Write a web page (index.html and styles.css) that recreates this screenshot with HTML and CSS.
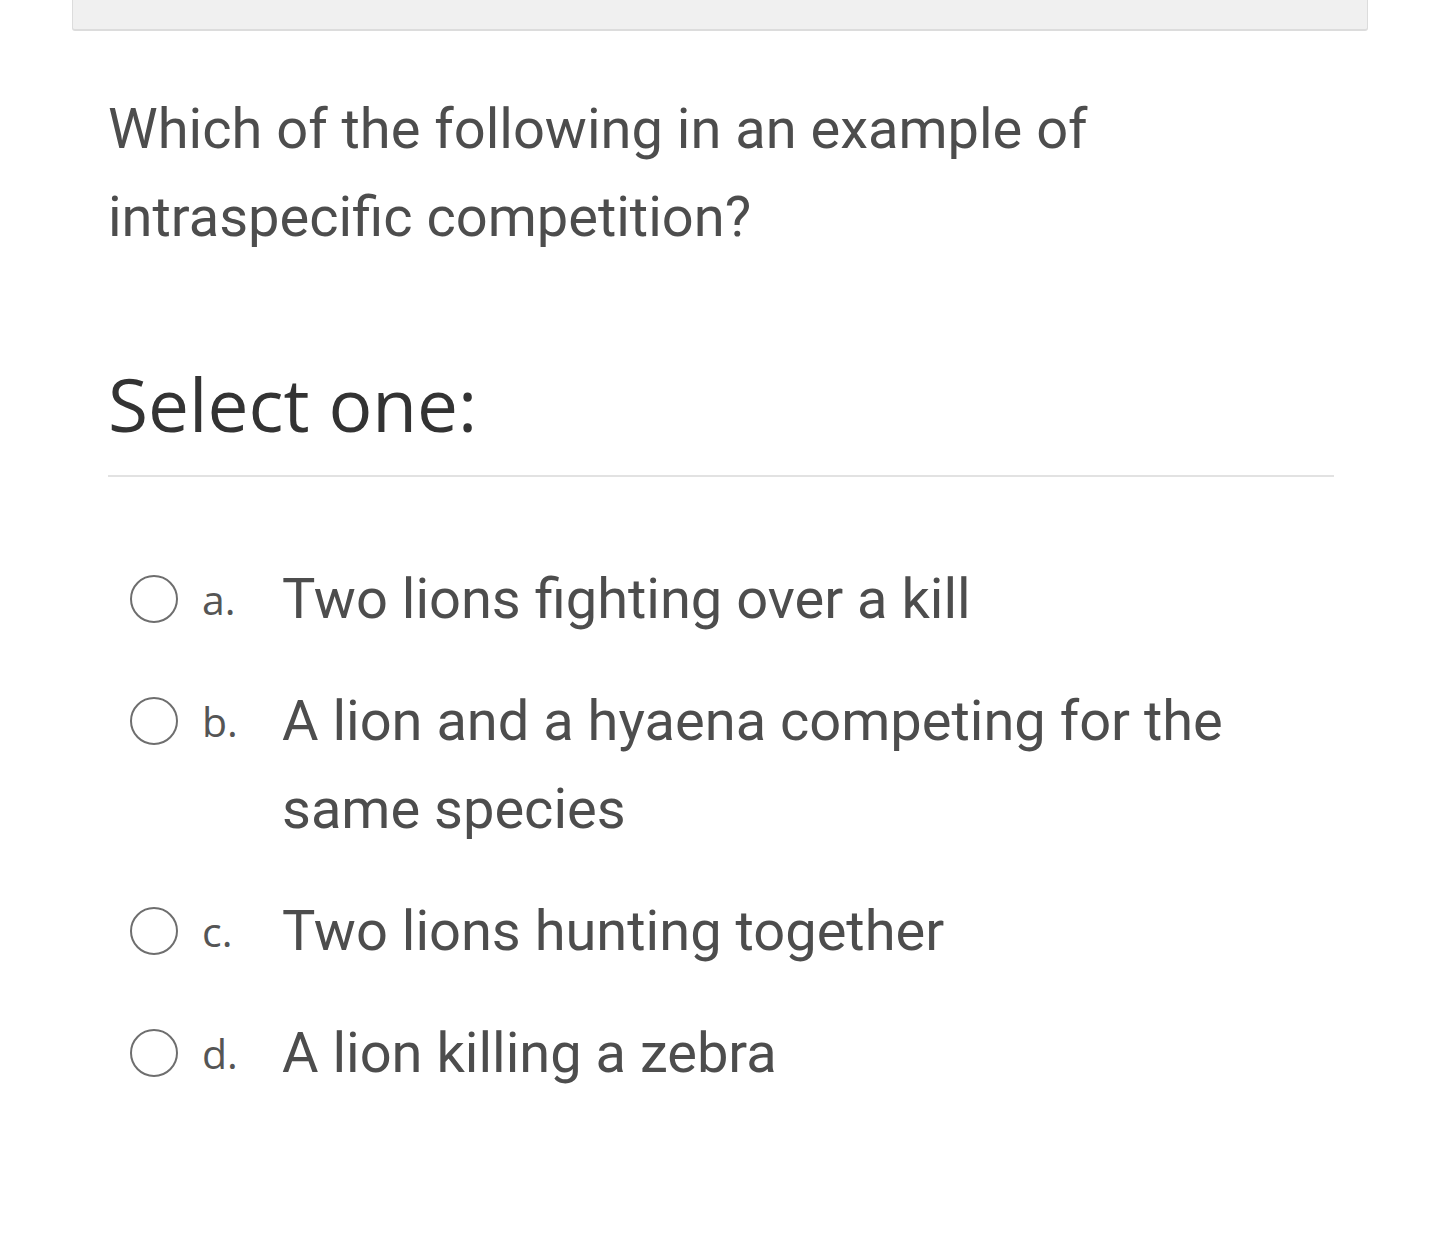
FILE: index.html
```html
<!DOCTYPE html>
<html>
<head>
<meta charset="utf-8">
<link rel="stylesheet" href="styles.css">
</head>
<body>
<div class="topbox"></div>
<div class="content">
  <div class="qtext">Which of the following in an example of intraspecific competition?</div>
  <div class="prompt">Select one:</div>
  <div class="answers">
    <div class="opt"><span class="radio"></span><span class="lbl">a.</span><span class="txt">Two lions fighting over a kill</span></div>
    <div class="opt"><span class="radio"></span><span class="lbl">b.</span><span class="txt">A lion and a hyaena competing for the same species</span></div>
    <div class="opt"><span class="radio"></span><span class="lbl">c.</span><span class="txt">Two lions hunting together</span></div>
    <div class="opt"><span class="radio"></span><span class="lbl">d.</span><span class="txt">A lion killing a zebra</span></div>
  </div>
</div>
</body>
</html>
```
FILE: styles.css
```css
html, body { margin: 0; padding: 0; background: #fff; }
body { width: 1440px; height: 1241px; overflow: hidden; }
.topbox {
  margin-left: 72px;
  width: 1294px;
  height: 29px;
  background: #f0f0f0;
  border: 1px solid #dcdcdc;
  border-top: none;
  border-bottom: 2px solid #dcdcdc;
  border-radius: 0 0 3px 3px;
}
.content {
  padding-left: 108px;
  width: 1226px;
}
.qtext {
  margin-top: 54px;
  font-family: Roboto, "Liberation Sans", sans-serif;
  font-size: 56px;
  line-height: 88px;
  color: #4d4d4d;
  width: 1000px;
}
.prompt {
  margin-top: 90px;
  font-family: "Open Sans", "Noto Sans", sans-serif;
  font-size: 73px;
  line-height: 105px;
  color: #333;
  padding-bottom: 19px;
  border-bottom: 2px solid #e2e2e2;
}
.answers {
  margin-top: 78px;
  display: flex;
  flex-direction: column;
  gap: 34px;
}
.opt {
  display: flex;
  align-items: flex-start;
}
.radio {
  flex: none;
  width: 48px;
  height: 48px;
  border: 2.5px solid #6e6e6e;
  border-radius: 50%;
  margin-left: 22px;
  margin-top: 20px;
  box-sizing: border-box;
}
.lbl {
  flex: none;
  width: 80px;
  margin-left: 24px;
  font-family: "Open Sans", "Noto Sans", sans-serif;
  font-size: 41px;
  line-height: 88px;
  color: #555;
}
.txt {
  flex: 1;
  font-family: Roboto, "Liberation Sans", sans-serif;
  font-size: 56px;
  line-height: 88px;
  color: #4d4d4d;
}
```
